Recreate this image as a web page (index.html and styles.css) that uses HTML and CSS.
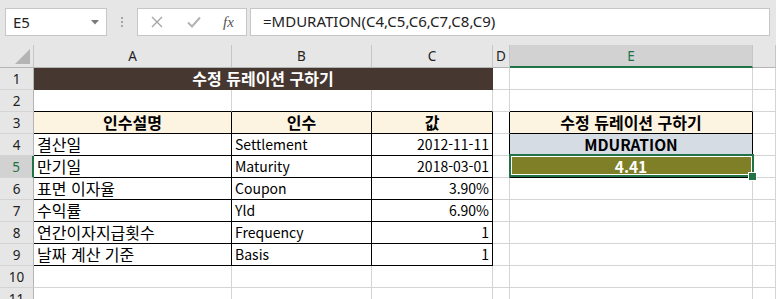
FILE: index.html
```html
<!DOCTYPE html>
<html lang="ko">
<head>
    <meta charset="UTF-8">
    <title>수정 듀레이션 구하기</title>
    <link rel="stylesheet" href="styles.css">
</head>
<body>
    <div class="formula-bar">
        <div class="name-box">
            <span>E5</span>
            <svg class="caret" width="8" height="5" viewBox="0 0 8 5"><path d="M0 0H8L4 4.5Z" fill="#7a7a7a"/></svg>
        </div>
        <div class="grip"><i></i><i></i><i></i></div>
        <div class="fx-buttons">
            <svg width="12" height="12" viewBox="0 0 12 12"><path d="M1 1L11 11M11 1L1 11" stroke="#a6a6a6" stroke-width="1.4" fill="none"/></svg>
            <svg width="14" height="12" viewBox="0 0 14 12"><path d="M1 6.5L5 10.5L13 1.5" stroke="#b3b3b3" stroke-width="2" fill="none"/></svg>
            <span class="fx">fx</span>
        </div>
        <div class="formula">=MDURATION(C4,C5,C6,C7,C8,C9)</div>
    </div>

    <div class="sheet">
        <div class="corner"><span></span></div>
        <div class="ch">A</div>
        <div class="ch">B</div>
        <div class="ch">C</div>
        <div class="ch">D</div>
        <div class="ch active">E</div>
        <div class="ch"></div>

        <div class="rh">1</div>
        <div class="c ko title">수정 듀레이션 구하기</div>
        <div class="c"></div>
        <div class="c"></div>
        <div class="c"></div>

        <div class="rh">2</div>
        <div class="c b-bottom"></div>
        <div class="c b-bottom"></div>
        <div class="c b-bottom"></div>
        <div class="c"></div>
        <div class="c b-bottom"></div>
        <div class="c"></div>

        <div class="rh">3</div>
        <div class="c ko tb th">인수설명</div>
        <div class="c ko tb th">인수</div>
        <div class="c ko tb th">값</div>
        <div class="c b-right"></div>
        <div class="c ko tb th">수정 듀레이션 구하기</div>
        <div class="c"></div>

        <div class="rh">4</div>
        <div class="c ko tb">결산일</div>
        <div class="c tb">Settlement</div>
        <div class="c tb num">2012-11-11</div>
        <div class="c b-right"></div>
        <div class="c tb blue">MDURATION</div>
        <div class="c"></div>

        <div class="rh active">5</div>
        <div class="c ko tb">만기일</div>
        <div class="c tb">Maturity</div>
        <div class="c tb num">2018-03-01</div>
        <div class="c b-right"></div>
        <div class="c tb olive sel">4.41</div>
        <div class="c"></div>

        <div class="rh">6</div>
        <div class="c ko tb">표면 이자율</div>
        <div class="c tb">Coupon</div>
        <div class="c tb num">3.90%</div>
        <div class="c"></div>
        <div class="c"></div>
        <div class="c"></div>

        <div class="rh">7</div>
        <div class="c ko tb">수익률</div>
        <div class="c tb">Yld</div>
        <div class="c tb num">6.90%</div>
        <div class="c"></div>
        <div class="c"></div>
        <div class="c"></div>

        <div class="rh">8</div>
        <div class="c ko tb">연간이자지급횟수</div>
        <div class="c tb">Frequency</div>
        <div class="c tb num">1</div>
        <div class="c"></div>
        <div class="c"></div>
        <div class="c"></div>

        <div class="rh">9</div>
        <div class="c ko tb">날짜 계산 기준</div>
        <div class="c tb">Basis</div>
        <div class="c tb num">1</div>
        <div class="c"></div>
        <div class="c"></div>
        <div class="c"></div>

        <div class="rh">10</div>
        <div class="c"></div>
        <div class="c"></div>
        <div class="c"></div>
        <div class="c"></div>
        <div class="c"></div>
        <div class="c"></div>

        <div class="rh">11</div>
        <div class="c"></div>
        <div class="c"></div>
        <div class="c"></div>
        <div class="c"></div>
        <div class="c"></div>
        <div class="c"></div>
    </div>
</body>
</html>
```

FILE: styles.css
```css
* {
    box-sizing: border-box;
}

body {
    margin: 0;
    width: 776px;
    height: 299px;
    overflow: hidden;
    background-color: #fff;
    font-family: "Noto Sans CJK KR", "Noto Sans", sans-serif;
    color: #000;
}

/* formula bar */
.formula-bar {
    height: 45px;
    background-color: #e6e6e6;
    display: flex;
    align-items: flex-start;
    padding-top: 8px;
}

.name-box {
    margin-left: 5px;
    width: 102px;
    height: 28px;
    background-color: #fff;
    border: 1px solid #c6c6c6;
    display: flex;
    align-items: center;
    justify-content: space-between;
    padding: 0 7px 0 7px;
    font-family: "Noto Sans", sans-serif;
    font-size: 15px;
    color: #222;
}

.grip {
    width: 30px;
    height: 28px;
    display: flex;
    flex-direction: column;
    align-items: center;
    justify-content: center;
    gap: 2px;
}

.grip i {
    width: 2px;
    height: 2px;
    background-color: #a6a6a6;
}

.fx-buttons {
    width: 110px;
    height: 28px;
    background-color: #fff;
    border: 1px solid #c6c6c6;
    display: flex;
    align-items: center;
    padding-left: 13px;
    gap: 24px;
}

.fx {
    font-family: "Liberation Serif", serif;
    font-style: italic;
    font-size: 15px;
    color: #555;
    margin-left: -2px;
}

.formula {
    margin-left: 3px;
    width: 520px;
    height: 28px;
    background-color: #fff;
    border: 1px solid #c6c6c6;
    padding-left: 12px;
    line-height: 25px;
    font-family: "Noto Sans", sans-serif;
    font-size: 15px;
    color: #222;
}

/* sheet grid */
.sheet {
    display: grid;
    grid-template-columns: 34px 198px 140px 121px 17px 243px 1fr;
    grid-template-rows: 23px;
    grid-auto-rows: 22px;
}

.corner,
.ch,
.rh {
    background-color: #e6e6e6;
    border-right: 1px solid #c6c6c6;
    border-bottom: 1px solid #b4b4b4;
    font-family: "Noto Sans", sans-serif;
    font-size: 13.5px;
    color: #222;
    display: flex;
    align-items: center;
    justify-content: center;
}

.corner {
    position: relative;
}

.corner span {
    position: absolute;
    right: 3px;
    bottom: 3px;
    width: 0;
    height: 0;
    border-left: 15px solid transparent;
    border-bottom: 15px solid #b4b4b4;
}

.ch.active {
    background-color: #d2d2d2;
    color: #217346;
    border-bottom: 2px solid #217346;
}

.rh {
    border-right-color: #b4b4b4;
    border-bottom-color: #d4d4d4;
}

.rh.active {
    background-color: #d2d2d2;
    color: #217346;
    border-right: 2px solid #217346;
}

.c {
    border-right: 1px solid #d4d4d4;
    border-bottom: 1px solid #d4d4d4;
    font-size: 14px;
    line-height: 21px;
    padding: 0 3px;
    white-space: nowrap;
}

.c.ko {
    font-size: 16px;
}

.title {
    grid-column: span 3;
    background-color: #463831;
    border-color: #463831;
    color: #fff;
    font-weight: bold;
    text-align: center;
}

.b-bottom {
    border-bottom-color: #000;
}

.b-right {
    border-right-color: #000;
}

.tb {
    border-right-color: #000;
    border-bottom-color: #000;
}

.th {
    background-color: #fdf3e1;
    font-weight: bold;
    text-align: center;
}

.num {
    text-align: right;
}

.blue {
    background-color: #d6dce4;
    font-size: 15.5px;
    font-weight: bold;
    text-align: center;
}

.olive {
    background-color: #7f7f27;
    color: #fff;
    font-size: 15.5px;
    font-weight: bold;
    text-align: center;
}

.sel {
    position: relative;
}

.sel::after {
    content: "";
    position: absolute;
    left: -1px;
    top: -2px;
    right: -2px;
    bottom: 0;
    border: 2px solid #217346;
    box-shadow: inset 0 0 0 1px #fff;
}

.sel::before {
    content: "";
    position: absolute;
    right: -5px;
    bottom: -4px;
    width: 7px;
    height: 7px;
    background-color: #217346;
    border: 1px solid #fff;
    z-index: 1;
}
```
